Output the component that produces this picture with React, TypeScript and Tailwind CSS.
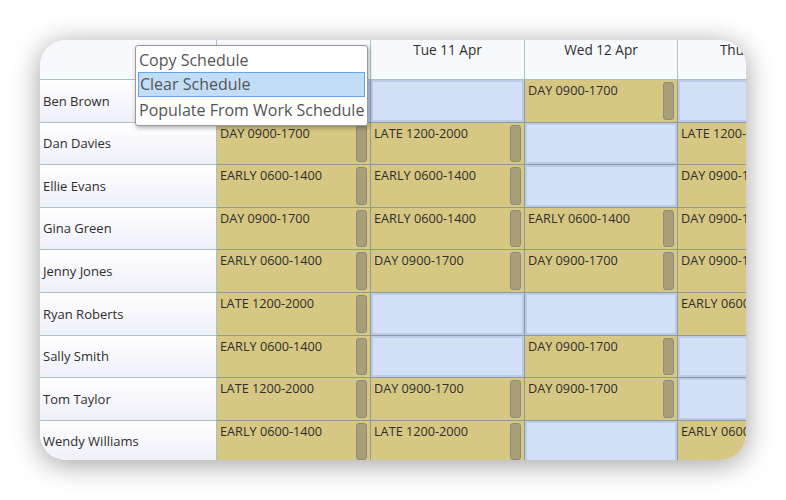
import React from 'react';

type Row = { name: string; shifts: (string | null)[] };

const days = ['Mon 10 Apr', 'Tue 11 Apr', 'Wed 12 Apr', 'Thu 13 Apr'];

const rows: Row[] = [
  { name: 'Ben Brown', shifts: [null, null, 'DAY 0900-1700', null] },
  { name: 'Dan Davies', shifts: ['DAY 0900-1700', 'LATE 1200-2000', null, 'LATE 1200-2000'] },
  { name: 'Ellie Evans', shifts: ['EARLY 0600-1400', 'EARLY 0600-1400', null, 'DAY 0900-1700'] },
  { name: 'Gina Green', shifts: ['DAY 0900-1700', 'EARLY 0600-1400', 'EARLY 0600-1400', 'DAY 0900-1700'] },
  { name: 'Jenny Jones', shifts: ['EARLY 0600-1400', 'DAY 0900-1700', 'DAY 0900-1700', 'DAY 0900-1700'] },
  { name: 'Ryan Roberts', shifts: ['LATE 1200-2000', null, null, 'EARLY 0600-1400'] },
  { name: 'Sally Smith', shifts: ['EARLY 0600-1400', null, 'DAY 0900-1700', null] },
  { name: 'Tom Taylor', shifts: ['LATE 1200-2000', 'DAY 0900-1700', 'DAY 0900-1700', null] },
  { name: 'Wendy Williams', shifts: ['EARLY 0600-1400', 'LATE 1200-2000', null, 'EARLY 0600-1400'] },
];

const cols = 'grid grid-cols-[177px_154px_154px_153px_154px]';

const ShiftCell = ({ label }: { label: string | null }) => {
  if (!label) {
    return (
      <div className="h-full border-r border-b border-[#8d9aa6] bg-[#d3e0f8] shadow-[inset_0_0_0_2px_#bccbe8]" />
    );
  }
  return (
    <div className="relative h-full border-r border-b border-[#8e9c96] bg-[#d6c782]">
      <span className="absolute left-[3px] top-[1px] whitespace-nowrap text-[12.7px] leading-[18px] text-[#2e2e2e]">
        {label}
      </span>
      <div className="absolute right-[3px] top-[2px] bottom-[2px] w-[11px] rounded-[3px] border border-[#8a8a86] bg-[#a89f76]" />
    </div>
  );
};

export default function App() {
  return (
    <div className="w-[786px] h-[500px] bg-white p-[40px] font-['Open_Sans',sans-serif]">
      <div className="relative w-[706px] h-[420px] overflow-hidden rounded-[26px] bg-white shadow-[0_4px_28px_rgba(0,0,0,0.38)]">
        <div className="w-[792px]">
          <div className={`${cols} h-[19px]`}>
            <div className="border-r border-b border-[#a7c3c3] bg-[#f8f9fd]" />
            {days.map((d) => (
              <div
                key={d}
                className="flex items-center justify-center whitespace-nowrap border-r border-b border-[#a7c3c3] bg-[#f8f9fd] text-[13.6px] text-[#2e2e2e]"
              >
                {d}
              </div>
            ))}
          </div>
          <div className={`${cols} h-[21px]`}>
            {[0, 1, 2, 3, 4].map((i) => (
              <div key={i} className="border-r border-b border-[#a7c3c3] bg-[#f8f9fd]" />
            ))}
          </div>
          {rows.map((r) => (
            <div key={r.name} className={`${cols} h-[42.6px]`}>
              <div className="flex items-center border-r border-b border-[#a7c3c3] bg-gradient-to-b from-white to-[#efeffa] pl-[3px] pt-[1px] text-[13px] text-[#2e2e2e]">
                {r.name}
              </div>
              {r.shifts.map((s, i) => (
                <ShiftCell key={i} label={s} />
              ))}
            </div>
          ))}
        </div>

        {/* context menu */}
        <div className="absolute left-[95px] top-[5px] w-[233px] rounded-[3px] border border-[#9a9a9a] bg-white py-[2px] shadow-[1px_2px_4px_rgba(0,0,0,0.3)]">
          <div className="h-[24px] whitespace-nowrap px-[3px] text-[16px] leading-[24px] text-[#555]">Copy Schedule</div>
          <div className="mx-[2px] h-[25px] whitespace-nowrap border border-[#63a6ef] bg-[#c3ddf7] px-[1px] text-[16px] leading-[23px] text-[#555]">
            Clear Schedule
          </div>
          <div className="h-[26px] whitespace-nowrap px-[3px] text-[16px] leading-[26px] text-[#555]">
            Populate From Work Schedule
          </div>
        </div>
      </div>
    </div>
  );
}
